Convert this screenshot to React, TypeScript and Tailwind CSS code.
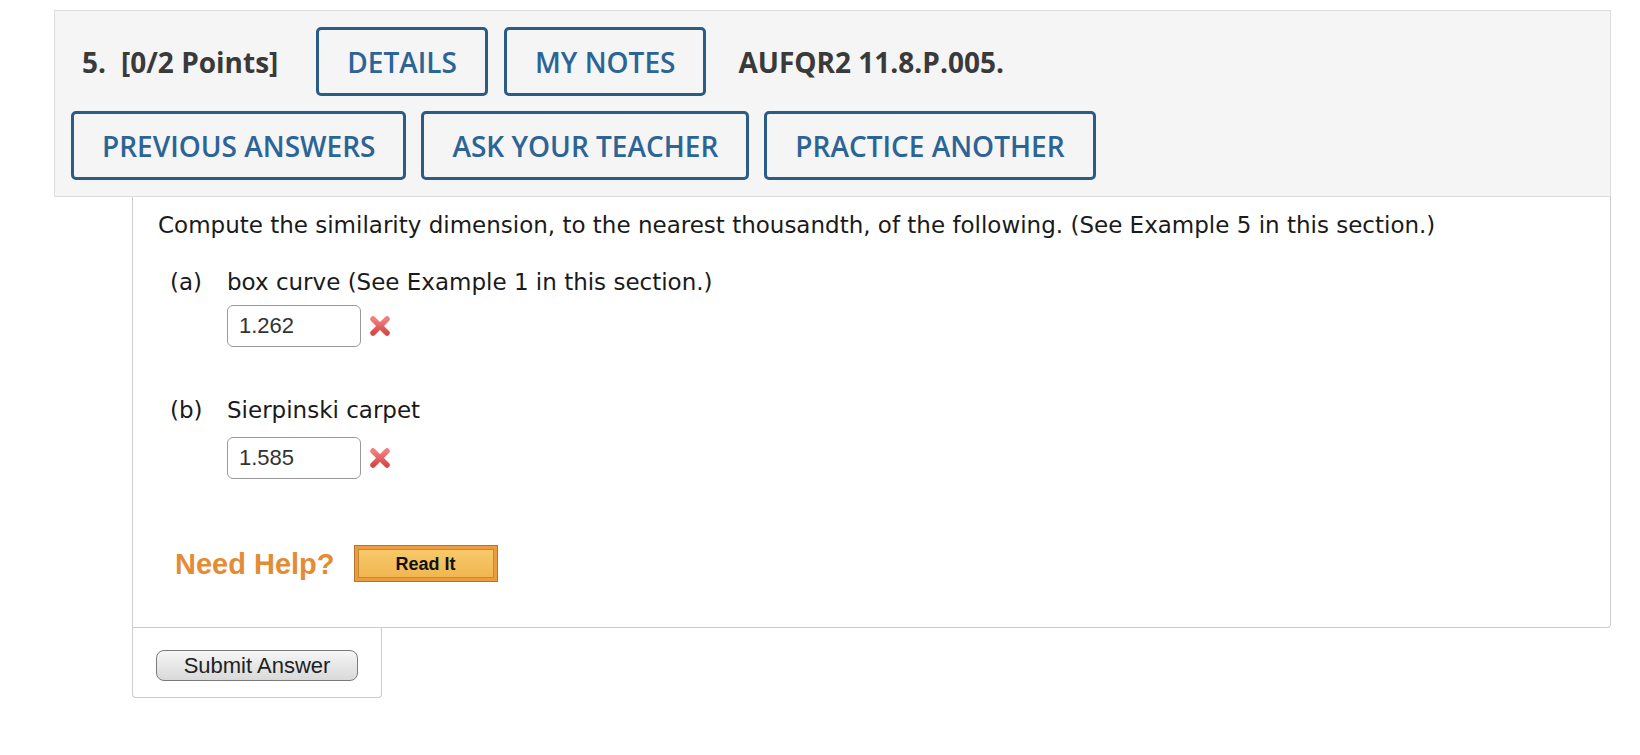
import { ReactNode } from 'react';

const headerBtn =
  "flex h-[69px] items-center rounded-[5px] border-[3px] border-[#2b5c87] px-[28px] text-[28px] font-semibold text-[#2c6495]";

function HeaderButton({ children }: { children: ReactNode }) {
  return <div className={headerBtn}>{children}</div>;
}

function WrongMark() {
  return (
    <svg width="22" height="22" viewBox="0 0 22 22" className="shrink-0">
      <defs>
        <linearGradient id="xg" x1="0" y1="0" x2="0" y2="1">
          <stop offset="0" stopColor="#f08080" />
          <stop offset="1" stopColor="#d94848" />
        </linearGradient>
      </defs>
      <path d="M4 4 L18 18 M18 4 L4 18" stroke="url(#xg)" strokeWidth="5.5" strokeLinecap="round" />
    </svg>
  );
}

function AnswerBox({ value }: { value: string }) {
  return (
    <div className="flex items-center gap-[8px]">
      <div className="flex h-[42px] w-[134px] items-center rounded-[6px] border border-[#9a9a9a] bg-white pl-[11px] font-['Liberation_Sans',Arial,sans-serif] text-[22px] text-[#333]">
        {value}
      </div>
      <WrongMark />
    </div>
  );
}

export default function App() {
  return (
    <div className="min-h-screen bg-white pl-[54px] pr-[29px] pt-[10px]">
      {/* question header */}
      <div className="border border-[#dddddd] bg-[#f5f5f5] px-[16px] pb-[16px] pt-[16px] font-['Open_Sans',sans-serif]">
        <div className="flex items-center gap-[16px]">
          <div className="ml-[11px] mr-[22px] flex gap-[15px] text-[28px] font-bold text-[#3a3a3a]">
            <span>5.</span>
            <span>[0/2 Points]</span>
          </div>
          <HeaderButton>DETAILS</HeaderButton>
          <HeaderButton>MY NOTES</HeaderButton>
          <span className="ml-[16px] text-[28px] font-bold text-[#3a3a3a]">AUFQR2 11.8.P.005.</span>
        </div>
        <div className="mt-[15px] flex items-center gap-[15px]">
          <HeaderButton>PREVIOUS ANSWERS</HeaderButton>
          <HeaderButton>ASK YOUR TEACHER</HeaderButton>
          <HeaderButton>PRACTICE ANOTHER</HeaderButton>
        </div>
      </div>

      {/* question body */}
      <div className="ml-[78px]">
        <div className="rounded-br-[4px] border border-t-0 border-[#cccccc] bg-white pb-[45px] pl-[25px] pt-[14px] font-['DejaVu_Sans',Verdana,sans-serif] text-[23px] leading-[28px] text-[#1a1a1a]">
          <p>
            Compute the similarity dimension, to the nearest thousandth, of the following. (See Example 5 in
            this section.)
          </p>

          <div className="mt-[29px] flex">
            <span className="ml-[12px] w-[57px]">(a)</span>
            <div>
              <p>box curve (See Example 1 in this section.)</p>
              <div className="mt-[9px]">
                <AnswerBox value="1.262" />
              </div>
            </div>
          </div>

          <div className="mt-[49px] flex">
            <span className="ml-[12px] w-[57px]">(b)</span>
            <div>
              <p>Sierpinski carpet</p>
              <div className="mt-[13px]">
                <AnswerBox value="1.585" />
              </div>
            </div>
          </div>

          <div className="ml-[17px] mt-[66px] flex items-center gap-[19px] font-['Liberation_Sans',Arial,sans-serif]">
            <span className="text-[29px] font-bold text-[#e48c35]">Need Help?</span>
            <div className="h-[37px] w-[144px] border border-[#b5752f] bg-[#ec9c3f] p-[3px]">
              <div className="flex h-full items-center justify-center border border-[#c3883d] bg-gradient-to-b from-[#f7c96a] to-[#f1b650] text-[18px] font-bold text-[#111]">
                Read It
              </div>
            </div>
          </div>
        </div>

        <div className="w-[250px] rounded-b-[4px] border border-t-0 border-[#cccccc] bg-white pb-[16px] pl-[23px] pt-[22px] font-['Liberation_Sans',Arial,sans-serif]">
          <div className="flex h-[31px] w-[202px] items-center justify-center rounded-[8px] border border-[#7a7a7a] bg-gradient-to-b from-[#f6f6f6] to-[#d9d9d9] text-[22px] text-[#222]">
            Submit Answer
          </div>
        </div>
      </div>
    </div>
  );
}
